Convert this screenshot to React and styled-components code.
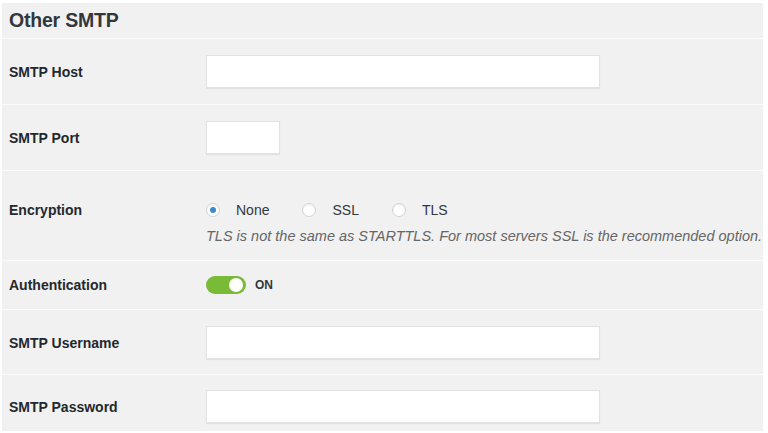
import React from 'react';
import styled, { createGlobalStyle } from 'styled-components';

const GlobalStyle = createGlobalStyle`
  html, body {
    margin: 0;
    padding: 0;
    background: #fff;
  }
  body {
    font-family: "Liberation Sans", Arial, sans-serif;
    color: #23282d;
  }
`;

const Panel = styled.div`
  margin: 3px 5px 2px 2px;
  background: #f1f1f1;
  height: 428px;
  overflow: hidden;
`;

const Header = styled.div`
  height: 35px;
  padding-left: 7px;
  display: flex;
  align-items: center;
  h2 {
    margin: 0;
    font-size: 19.5px;
    font-weight: bold;
    color: #32373c;
    letter-spacing: -0.2px;
  }
`;

const Row = styled.div`
  display: flex;
  align-items: ${(p) => (p.$top ? 'flex-start' : 'center')};
  border-top: 1px solid #fbfbfb;
  padding: ${(p) => p.$pad || '16px 0'};
`;

const Label = styled.div`
  width: 204px;
  flex-shrink: 0;
  padding-left: 7px;
  box-sizing: border-box;
  font-size: 14px;
  font-weight: bold;
  color: #23282d;
  line-height: 20px;
`;

const Field = styled.div`
  flex: 1;
`;

const Input = styled.input`
  display: block;
  width: ${(p) => p.$w || 394}px;
  height: 33px;
  box-sizing: border-box;
  border: 1px solid #e2e2e2;
  background: #fff;
  box-shadow: 0 1px 1px rgba(0, 0, 0, 0.06);
  margin: 0;
  outline: none;
`;

const Radios = styled.div`
  display: flex;
  align-items: center;
  height: 20px;
`;

const RadioOption = styled.label`
  display: flex;
  align-items: center;
  margin-right: 33px;
  font-size: 14px;
  color: #32373c;
`;

const RadioDot = styled.span`
  width: 14px;
  height: 14px;
  border-radius: 50%;
  box-sizing: border-box;
  border: 1px solid #d0d3d6;
  background: #fff;
  box-shadow: inset 0 1px 2px rgba(0, 0, 0, 0.08);
  margin-right: 16px;
  display: flex;
  align-items: center;
  justify-content: center;
  &::after {
    content: '';
    width: 6px;
    height: 6px;
    border-radius: 50%;
    background: ${(p) => (p.$checked ? '#3b8bc9' : 'transparent')};
  }
`;

const Description = styled.p`
  margin: 6px 0 0;
  font-size: 14.5px;
  font-style: italic;
  color: #666;
  line-height: 20px;
  white-space: nowrap;
`;

const ToggleWrap = styled.div`
  display: flex;
  align-items: center;
  gap: 9px;
`;

const Toggle = styled.span`
  width: 40px;
  height: 18px;
  border-radius: 9px;
  background: #79bb36;
  display: flex;
  align-items: center;
  justify-content: flex-end;
  padding: 0 3px;
  box-sizing: border-box;
  &::after {
    content: '';
    width: 14px;
    height: 14px;
    border-radius: 50%;
    background: #fff;
  }
`;

const ToggleText = styled.span`
  font-size: 12px;
  font-weight: bold;
  color: #32373c;
`;

const App = () => {
  return (
    <>
      <GlobalStyle />
      <Panel>
        <Header>
          <h2>Other SMTP</h2>
        </Header>
        <Row>
          <Label>SMTP Host</Label>
          <Field>
            <Input type="text" />
          </Field>
        </Row>
        <Row>
          <Label>SMTP Port</Label>
          <Field>
            <Input type="text" $w={74} />
          </Field>
        </Row>
        <Row $top $pad="29px 0 14px">
          <Label>Encryption</Label>
          <Field>
            <Radios>
              <RadioOption>
                <RadioDot $checked />
                None
              </RadioOption>
              <RadioOption>
                <RadioDot />
                SSL
              </RadioOption>
              <RadioOption>
                <RadioDot />
                TLS
              </RadioOption>
            </Radios>
            <Description>
              TLS is not the same as STARTTLS. For most servers SSL is the recommended option.
            </Description>
          </Field>
        </Row>
        <Row $pad="14px 0">
          <Label>Authentication</Label>
          <Field>
            <ToggleWrap>
              <Toggle />
              <ToggleText>ON</ToggleText>
            </ToggleWrap>
          </Field>
        </Row>
        <Row $pad="16px 0 15px">
          <Label>SMTP Username</Label>
          <Field>
            <Input type="text" />
          </Field>
        </Row>
        <Row $pad="15px 0">
          <Label>SMTP Password</Label>
          <Field>
            <Input type="password" />
          </Field>
        </Row>
      </Panel>
    </>
  );
};

export default App;
